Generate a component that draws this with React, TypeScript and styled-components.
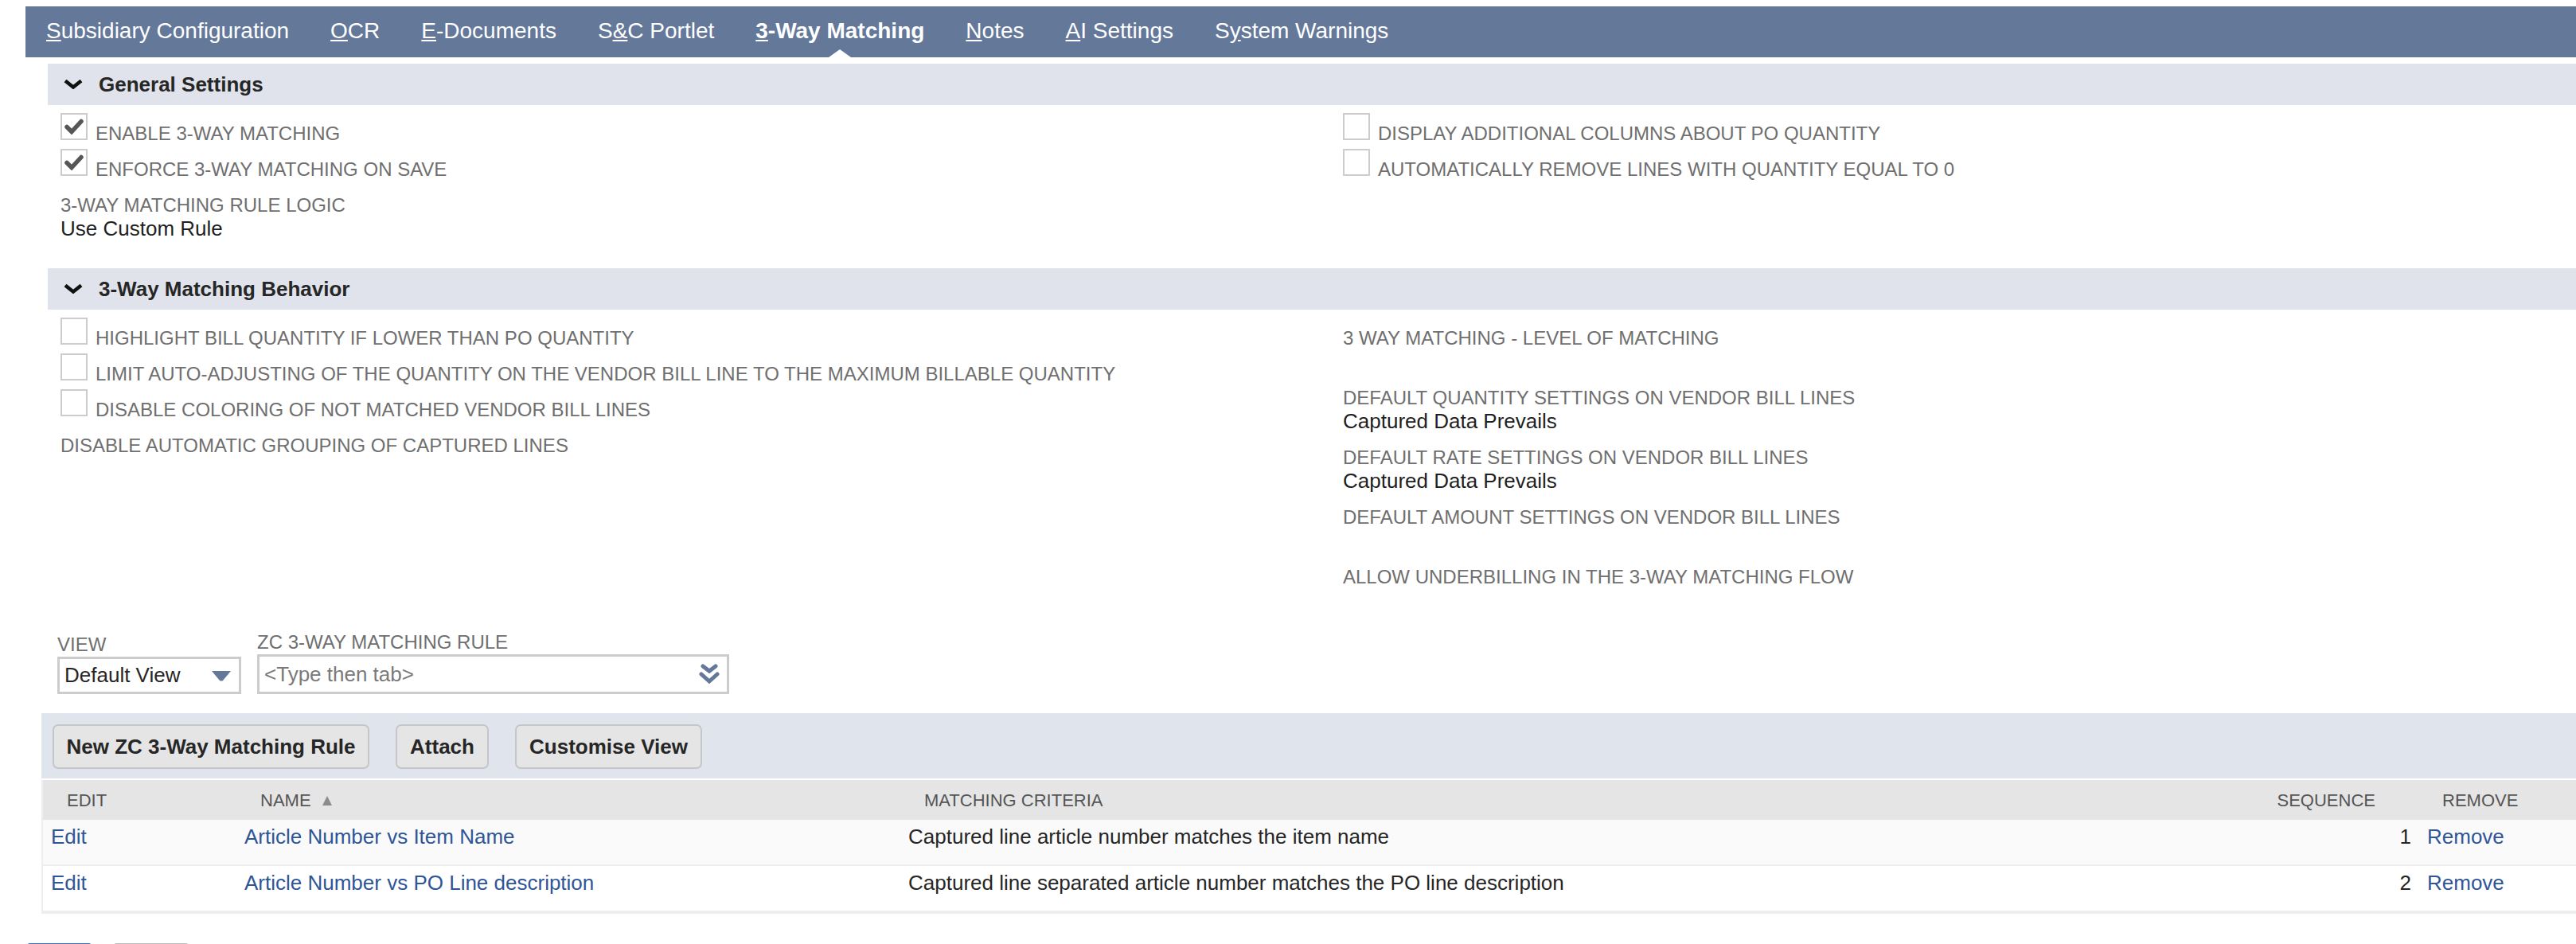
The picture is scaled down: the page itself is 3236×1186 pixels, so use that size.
import React from 'react';
import styled, { createGlobalStyle } from 'styled-components';

const GlobalStyle = createGlobalStyle`
  html, body {
    margin: 0;
    height: 100%;
    overflow: hidden;
    background: #fff;
  }

  body {
    font-family: "Liberation Sans", Arial, sans-serif;
    font-size: 26px;
    color: #262626;
  }
`;

const Page = styled.div`
  padding: 8px 0 0 32px;
  height: 1178px;
  overflow: hidden;
`;

const TabBar = styled.nav`
  display: flex;
  align-items: center;
  gap: 52px;
  height: 64px;
  padding: 0 0 2px 26px;
  box-sizing: border-box;
  background: #64789a;
`;

const Tab = styled.a<{ $active?: boolean }>`
  position: relative;
  color: #fff;
  font-size: 28px;
  font-weight: ${(p) => (p.$active ? 700 : 400)};
  white-space: nowrap;

  ${(p) =>
    p.$active &&
    `
    &::after {
      content: '';
      position: absolute;
      left: 50%;
      bottom: -17px;
      margin-left: -14px;
      border-left: 14px solid transparent;
      border-right: 14px solid transparent;
      border-bottom: 10px solid #fff;
    }
  `}
`;

const Section = styled.section`
  margin: 8px 0 0 28px;
`;

const SectionHeader = styled.h2`
  display: flex;
  align-items: center;
  gap: 20px;
  height: 52px;
  margin: 0;
  padding-left: 20px;
  background: #e0e3eb;
  color: #262626;
  font-size: 26px;
  font-weight: 700;
`;

const SectionBody = styled.div<{ $height: number }>`
  display: grid;
  grid-template-columns: 1611px 1fr;
  height: ${(p) => p.$height}px;
  padding: 10px 0 0 16px;
  box-sizing: border-box;
`;

const Column = styled.div`
  display: flex;
  flex-direction: column;
`;

const CheckRow = styled.div`
  display: flex;
  gap: 10px;
  height: 45px;
`;

const CheckBox = styled.span`
  display: flex;
  align-items: center;
  justify-content: center;
  flex: none;
  width: 34px;
  height: 34px;
  box-sizing: border-box;
  border: 2px solid #cccccc;
`;

const FieldLabel = styled.div`
  color: #6f6f6f;
  font-size: 24px;
  line-height: 30px;
  white-space: nowrap;
`;

const CheckLabel = styled(FieldLabel)`
  margin-top: 11px;
`;

const Field = styled.div<{ $tall?: boolean }>`
  height: ${(p) => (p.$tall ? 75 : 45)}px;
  padding-top: 11px;
  box-sizing: border-box;
`;

const FieldValue = styled.div`
  margin-top: -1px;
  color: #1f1f1f;
  font-size: 26px;
  line-height: 30px;
`;

const FilterRow = styled.div`
  display: flex;
  align-items: flex-end;
  gap: 20px;
  margin-left: 40px;
`;

const ViewLabel = styled(FieldLabel)`
  margin-bottom: 2px;
  line-height: 26px;
`;

const SelectBox = styled.div`
  display: flex;
  align-items: center;
  justify-content: space-between;
  width: 231px;
  height: 47px;
  padding: 0 10px 0 6px;
  box-sizing: border-box;
  border: 3px solid #cccccc;
  color: #262626;
`;

const LookupBox = styled.div`
  display: flex;
  align-items: center;
  justify-content: space-between;
  width: 593px;
  height: 50px;
  padding: 0 9px 0 6px;
  box-sizing: border-box;
  border: 3px solid #cccccc;
  color: #7a7a7a;
`;

const ListWrap = styled.div`
  margin: 24px 0 0 20px;
`;

const Toolbar = styled.div`
  display: flex;
  align-items: flex-start;
  gap: 33px;
  height: 82px;
  padding: 14px 0 0 14px;
  box-sizing: border-box;
  background: #e0e4ec;
`;

const ToolButton = styled.button<{ $width: number }>`
  width: ${(p) => p.$width}px;
  height: 56px;
  padding: 1px 0 0;
  border: 2px solid #c4c6ca;
  border-radius: 7px;
  background: #e5e5e5;
  color: #262626;
  font-family: inherit;
  font-size: 26px;
  font-weight: 700;
`;

const Table = styled.div`
  margin-top: 2px;
  border-left: 2px solid #eeeeee;
  border-bottom: 4px solid #eeeeee;
`;

const HeaderRow = styled.div`
  display: grid;
  grid-template-columns: 243px 834px 1fr 200px 197px;
  align-items: center;
  height: 50px;
  padding-top: 1px;
  box-sizing: border-box;
  background: #e5e5e5;
  color: #555555;
  font-size: 22px;
`;

const HeaderCell = styled.div<{ $indent: number; $right?: number }>`
  display: flex;
  align-items: center;
  gap: 13px;
  padding-left: ${(p) => p.$indent}px;
  ${(p) => p.$right !== undefined && `justify-content: flex-end; padding-right: ${p.$right}px;`}
`;

const Row = styled.div<{ $shaded?: boolean }>`
  display: grid;
  grid-template-columns: 243px 834px 1fr 200px 197px;
  height: 56px;
  padding-top: 6px;
  box-sizing: border-box;
  background: ${(p) => (p.$shaded ? '#fafafa' : '#fff')};
  ${(p) => p.$shaded && 'border-bottom: 2px solid #eeeeee; height: 58px;'}
`;

const Cell = styled.div<{ $right?: boolean }>`
  padding: 0 10px;
  font-size: 26px;
  line-height: 30px;
  color: #262626;
  text-align: ${(p) => (p.$right ? 'right' : 'left')};
`;

const LinkText = styled.a`
  color: #2f5597;
`;

const Footer = styled.div`
  display: flex;
  gap: 30px;
  margin: 37px 0 0 3px;
`;

const FooterButton = styled.div<{ $primary?: boolean }>`
  width: ${(p) => (p.$primary ? 79 : 92)}px;
  height: 60px;
  border-radius: 2px;
  background: ${(p) => (p.$primary ? '#3a6fd0' : '#bdbdbd')};
`;

const tabs = [
  { before: '', key: 'S', after: 'ubsidiary Configuration' },
  { before: '', key: 'O', after: 'CR' },
  { before: '', key: 'E', after: '-Documents' },
  { before: 'S', key: '&', after: 'C Portlet' },
  { before: '', key: '3', after: '-Way Matching', active: true },
  { before: '', key: 'N', after: 'otes' },
  { before: '', key: 'A', after: 'I Settings' },
  { before: 'S', key: 'y', after: 'stem Warnings' },
];

const rules = [
  {
    name: 'Article Number vs Item Name',
    criteria: 'Captured line article number matches the item name',
    sequence: 1,
  },
  {
    name: 'Article Number vs PO Line description',
    criteria: 'Captured line separated article number matches the PO line description',
    sequence: 2,
  },
];

const Chevron = () => (
  <svg width="24" height="12" viewBox="0 0 24 12">
    <path d="M2 1.5 L12 9.5 L22 1.5" fill="none" stroke="#111" strokeWidth="4.5" />
  </svg>
);

const CheckMark = () => (
  <svg width="24" height="20" viewBox="0 0 24 20">
    <path
      d="M3 10.5 L9 16.5 L21 3.5"
      fill="none"
      stroke="#565656"
      strokeWidth="5.5"
      strokeLinecap="round"
    />
  </svg>
);

const DoubleChevron = () => (
  <svg width="26" height="26" viewBox="0 0 26 26">
    <path
      d="M5 3 L13 9 L21 3 M3 13 L13 22 L23 13"
      fill="none"
      stroke="#64789a"
      strokeWidth="5"
      strokeLinecap="round"
    />
  </svg>
);

const Option: React.FC<{ label: string; checked?: boolean }> = ({ label, checked }) => (
  <CheckRow>
    <CheckBox>{checked && <CheckMark />}</CheckBox>
    <CheckLabel>{label}</CheckLabel>
  </CheckRow>
);

const App: React.FC = () => {
  return (
    <Page>
      <GlobalStyle />
      <TabBar>
        {tabs.map((tab) => (
          <Tab key={tab.after} $active={tab.active}>
            {tab.before}
            <u>{tab.key}</u>
            {tab.after}
          </Tab>
        ))}
      </TabBar>

      <Section>
        <SectionHeader>
          <Chevron />
          General Settings
        </SectionHeader>
        <SectionBody $height={197}>
          <Column>
            <Option label="ENABLE 3-WAY MATCHING" checked />
            <Option label="ENFORCE 3-WAY MATCHING ON SAVE" checked />
            <Field $tall>
              <FieldLabel>3-WAY MATCHING RULE LOGIC</FieldLabel>
              <FieldValue>Use Custom Rule</FieldValue>
            </Field>
          </Column>
          <Column>
            <Option label="DISPLAY ADDITIONAL COLUMNS ABOUT PO QUANTITY" />
            <Option label="AUTOMATICALLY REMOVE LINES WITH QUANTITY EQUAL TO 0" />
          </Column>
        </SectionBody>
      </Section>

      <Section>
        <SectionHeader>
          <Chevron />
          3-Way Matching Behavior
        </SectionHeader>
        <SectionBody $height={405}>
          <Column>
            <Option label="HIGHLIGHT BILL QUANTITY IF LOWER THAN PO QUANTITY" />
            <Option label="LIMIT AUTO-ADJUSTING OF THE QUANTITY ON THE VENDOR BILL LINE TO THE MAXIMUM BILLABLE QUANTITY" />
            <Option label="DISABLE COLORING OF NOT MATCHED VENDOR BILL LINES" />
            <Field>
              <FieldLabel>DISABLE AUTOMATIC GROUPING OF CAPTURED LINES</FieldLabel>
            </Field>
          </Column>
          <Column>
            <Field $tall>
              <FieldLabel>3 WAY MATCHING - LEVEL OF MATCHING</FieldLabel>
            </Field>
            <Field $tall>
              <FieldLabel>DEFAULT QUANTITY SETTINGS ON VENDOR BILL LINES</FieldLabel>
              <FieldValue>Captured Data Prevails</FieldValue>
            </Field>
            <Field $tall>
              <FieldLabel>DEFAULT RATE SETTINGS ON VENDOR BILL LINES</FieldLabel>
              <FieldValue>Captured Data Prevails</FieldValue>
            </Field>
            <Field $tall>
              <FieldLabel>DEFAULT AMOUNT SETTINGS ON VENDOR BILL LINES</FieldLabel>
            </Field>
            <Field $tall>
              <FieldLabel>ALLOW UNDERBILLING IN THE 3-WAY MATCHING FLOW</FieldLabel>
            </Field>
          </Column>
        </SectionBody>
      </Section>

      <FilterRow>
        <div>
          <ViewLabel>VIEW</ViewLabel>
          <SelectBox>
            Default View
            <svg width="24" height="14" viewBox="0 0 24 14">
              <path d="M0 1 H24 L14 13 Q12 14 10 13 Z" fill="#64789a" />
            </svg>
          </SelectBox>
        </div>
        <div>
          <ViewLabel>ZC 3-WAY MATCHING RULE</ViewLabel>
          <LookupBox>
            {'<Type then tab>'}
            <DoubleChevron />
          </LookupBox>
        </div>
      </FilterRow>

      <ListWrap>
        <Toolbar>
          <ToolButton $width={398}>New ZC 3-Way Matching Rule</ToolButton>
          <ToolButton $width={117}>Attach</ToolButton>
          <ToolButton $width={235}>Customise View</ToolButton>
        </Toolbar>
        <Table>
          <HeaderRow>
            <HeaderCell $indent={30}>EDIT</HeaderCell>
            <HeaderCell $indent={30}>
              NAME
              <svg width="14" height="12" viewBox="0 0 14 12">
                <path d="M7 0 L13 12 H1 Z" fill="#8c8c8c" />
              </svg>
            </HeaderCell>
            <HeaderCell $indent={30}>MATCHING CRITERIA</HeaderCell>
            <HeaderCell $indent={0} $right={55}>SEQUENCE</HeaderCell>
            <HeaderCell $indent={29}>REMOVE</HeaderCell>
          </HeaderRow>
          {rules.map((rule, index) => (
            <Row key={rule.name} $shaded={index === 0}>
              <Cell><LinkText>Edit</LinkText></Cell>
              <Cell><LinkText>{rule.name}</LinkText></Cell>
              <Cell>{rule.criteria}</Cell>
              <Cell $right>{rule.sequence}</Cell>
              <Cell><LinkText>Remove</LinkText></Cell>
            </Row>
          ))}
        </Table>
      </ListWrap>

      <Footer>
        <FooterButton $primary />
        <FooterButton />
      </Footer>
    </Page>
  );
};

export default App;
